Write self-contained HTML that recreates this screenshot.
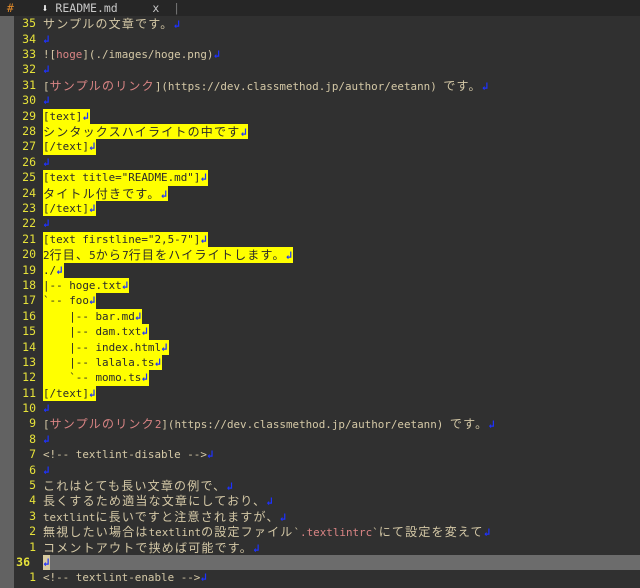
<!DOCTYPE html>
<html><head><meta charset="utf-8"><style>
body{margin:0;width:640px;height:588px;background:#303030;overflow:hidden;position:relative;font-family:"DejaVu Sans Mono","Noto Sans CJK JP",monospace;font-size:10.9px;color:#d4c8a6}
#tab{position:absolute;left:0;top:0;width:640px;height:16px;background:#262626;line-height:16px;white-space:pre;color:#c8c8c8;font-size:11.5px}
#stripe{position:absolute;left:0;top:16px;width:14px;height:572px;background:#626262}
#ed{position:absolute;left:0;top:16.3px;width:640px}
.row{position:relative;height:15.4px;line-height:15.4px;white-space:pre;overflow:hidden}
.n{position:absolute;left:0;top:0;width:36px;text-align:right;color:#e6e23a;font-size:11.5px}
.t{position:absolute;left:43px;top:0;height:15.4px;display:block;line-height:15.4px}
.t span{line-height:15.4px}
.h{display:inline-block;vertical-align:top;height:15.4px;background:#ffff00;color:#2a2a2a;padding-right:1px}
.j{font-family:"Noto Sans CJK JP",sans-serif;font-size:12px;letter-spacing:1.2px}
.r{color:#1e32ff;font-weight:bold}
.p{color:#d98484}
.cur .t{left:43px;right:0;background:#6c6c6c}
.cur .n{left:0;width:30px;font-weight:bold}
.cb{display:inline-block;vertical-align:top;height:15.4px;background:#d8cba0}
</style></head><body>
<div id="tab"><span style="color:#e08a2a"> #</span>    <span style="color:#fff">⬇</span> README.md     x  <span style="color:#777">|</span></div>
<div id="stripe"></div>
<div id="ed">
<div class="row"><span class="n">35</span><span class="t"><span class="j">サンプルの文章です。</span><span class="r">↲</span></span></div>
<div class="row"><span class="n">34</span><span class="t"><span class="r">↲</span></span></div>
<div class="row"><span class="n">33</span><span class="t">![<span class="p">hoge</span>](./images/hoge.png)<span class="r">↲</span></span></div>
<div class="row"><span class="n">32</span><span class="t"><span class="r">↲</span></span></div>
<div class="row"><span class="n">31</span><span class="t">[<span class="p j">サンプルのリンク</span>](https://dev.classmethod.jp/author/eetann) <span class="j">です。</span><span class="r">↲</span></span></div>
<div class="row"><span class="n">30</span><span class="t"><span class="r">↲</span></span></div>
<div class="row"><span class="n">29</span><span class="t"><span class="h">[text]<span class="r">↲</span></span></span></div>
<div class="row"><span class="n">28</span><span class="t"><span class="h"><span class="j">シンタックスハイライトの中です</span><span class="r">↲</span></span></span></div>
<div class="row"><span class="n">27</span><span class="t"><span class="h">[/text]<span class="r">↲</span></span></span></div>
<div class="row"><span class="n">26</span><span class="t"><span class="r">↲</span></span></div>
<div class="row"><span class="n">25</span><span class="t"><span class="h">[text title="README.md"]<span class="r">↲</span></span></span></div>
<div class="row"><span class="n">24</span><span class="t"><span class="h"><span class="j">タイトル付きです。</span><span class="r">↲</span></span></span></div>
<div class="row"><span class="n">23</span><span class="t"><span class="h">[/text]<span class="r">↲</span></span></span></div>
<div class="row"><span class="n">22</span><span class="t"><span class="r">↲</span></span></div>
<div class="row"><span class="n">21</span><span class="t"><span class="h">[text firstline="2,5-7"]<span class="r">↲</span></span></span></div>
<div class="row"><span class="n">20</span><span class="t"><span class="h">2<span class="j">行目、</span>5<span class="j">から</span>7<span class="j">行目をハイライトします。</span><span class="r">↲</span></span></span></div>
<div class="row"><span class="n">19</span><span class="t"><span class="h">./<span class="r">↲</span></span></span></div>
<div class="row"><span class="n">18</span><span class="t"><span class="h">|-- hoge.txt<span class="r">↲</span></span></span></div>
<div class="row"><span class="n">17</span><span class="t"><span class="h">`-- foo<span class="r">↲</span></span></span></div>
<div class="row"><span class="n">16</span><span class="t"><span class="h">    |-- bar.md<span class="r">↲</span></span></span></div>
<div class="row"><span class="n">15</span><span class="t"><span class="h">    |-- dam.txt<span class="r">↲</span></span></span></div>
<div class="row"><span class="n">14</span><span class="t"><span class="h">    |-- index.html<span class="r">↲</span></span></span></div>
<div class="row"><span class="n">13</span><span class="t"><span class="h">    |-- lalala.ts<span class="r">↲</span></span></span></div>
<div class="row"><span class="n">12</span><span class="t"><span class="h">    `-- momo.ts<span class="r">↲</span></span></span></div>
<div class="row"><span class="n">11</span><span class="t"><span class="h">[/text]<span class="r">↲</span></span></span></div>
<div class="row"><span class="n">10</span><span class="t"><span class="r">↲</span></span></div>
<div class="row"><span class="n">9</span><span class="t">[<span class="p j">サンプルのリンク</span><span class="p">2</span>](https://dev.classmethod.jp/author/eetann) <span class="j">です。</span><span class="r">↲</span></span></div>
<div class="row"><span class="n">8</span><span class="t"><span class="r">↲</span></span></div>
<div class="row"><span class="n">7</span><span class="t">&lt;!-- textlint-disable --&gt;<span class="r">↲</span></span></div>
<div class="row"><span class="n">6</span><span class="t"><span class="r">↲</span></span></div>
<div class="row"><span class="n">5</span><span class="t"><span class="j">これはとても長い文章の例で、</span><span class="r">↲</span></span></div>
<div class="row"><span class="n">4</span><span class="t"><span class="j">長くするため適当な文章にしており、</span><span class="r">↲</span></span></div>
<div class="row"><span class="n">3</span><span class="t">textlint<span class="j">に長いですと注意されますが、</span><span class="r">↲</span></span></div>
<div class="row"><span class="n">2</span><span class="t"><span class="j">無視したい場合は</span>textlint<span class="j">の設定ファイル</span>`<span class="p">.textlintrc</span>`<span class="j">にて設定を変えて</span><span class="r">↲</span></span></div>
<div class="row"><span class="n">1</span><span class="t"><span class="j">コメントアウトで挟めば可能です。</span><span class="r">↲</span></span></div>
<div class="row cur"><span class="n">36</span><span class="t"><span class="cb"><span class="r">↲</span></span></span></div>
<div class="row"><span class="n">1</span><span class="t">&lt;!-- textlint-enable --&gt;<span class="r">↲</span></span></div>
</div>
</body></html>
